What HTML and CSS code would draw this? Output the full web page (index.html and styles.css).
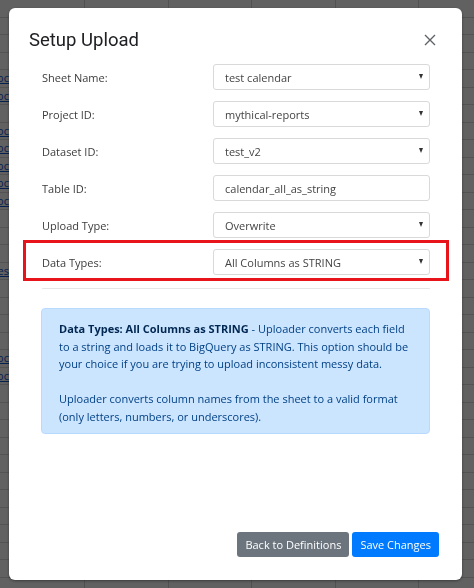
FILE: index.html
```html
<!DOCTYPE html>
<html lang="en">
<head>
    <meta charset="UTF-8">
    <meta name="viewport" content="width=device-width, initial-scale=1.0">
    <title>Setup Upload</title>
    <link rel="stylesheet" href="styles.css">
</head>
<body>
    <!-- sheet behind the dialog -->
    <div class="sheet">
        <div class="sheet-row"></div>
        <div class="sheet-row"></div>
        <div class="sheet-row"></div>
        <div class="sheet-row"></div>
        <div class="sheet-row"><a class="cell-link">calendar_doc</a></div>
        <div class="sheet-row"><a class="cell-link">calendar_doc</a></div>
        <div class="sheet-row"></div>
        <div class="sheet-row"><a class="cell-link">reports_doc</a></div>
        <div class="sheet-row"><a class="cell-link">reports_doc</a></div>
        <div class="sheet-row"><a class="cell-link">reports_doc</a></div>
        <div class="sheet-row"><a class="cell-link">reports_doc</a></div>
        <div class="sheet-row"><a class="cell-link">reports_doc</a></div>
        <div class="sheet-row"></div>
        <div class="sheet-row"></div>
        <div class="sheet-row"></div>
        <div class="sheet-row"><a class="cell-link">types.</a></div>
        <div class="sheet-row"></div>
        <div class="sheet-row"></div>
        <div class="sheet-row"></div>
        <div class="sheet-row"></div>
        <div class="sheet-row"><a class="cell-link">string_doc</a></div>
        <div class="sheet-row"><a class="cell-link">string_doc</a></div>
        <div class="sheet-row"></div>
        <div class="sheet-row"></div>
        <div class="sheet-row"></div>
        <div class="sheet-row"></div>
        <div class="sheet-row"></div>
        <div class="sheet-row"></div>
        <div class="sheet-row"></div>
        <div class="sheet-row"></div>
        <div class="sheet-row"></div>
        <div class="sheet-row"></div>
        <div class="sheet-row"></div>
        <div class="sheet-row"></div>
    </div>

    <div class="backdrop">
        <div class="modal">
            <div class="modal-header">
                <h2 class="modal-title">Setup Upload</h2>
                <button class="close" aria-label="Close">
                    <svg width="12" height="12" viewBox="0 0 12 12">
                        <path d="M1 1 L11 11 M11 1 L1 11" stroke="#5f6368" stroke-width="1.4" fill="none"/>
                    </svg>
                </button>
            </div>

            <div class="modal-body">
                <div class="form">
                    <div class="row">
                        <label class="label">Sheet Name:</label>
                        <div class="select"><span>test calendar</span><span class="caret"></span></div>
                    </div>
                    <div class="row">
                        <label class="label">Project ID:</label>
                        <div class="select"><span>mythical-reports</span><span class="caret"></span></div>
                    </div>
                    <div class="row">
                        <label class="label">Dataset ID:</label>
                        <div class="select"><span>test_v2</span><span class="caret"></span></div>
                    </div>
                    <div class="row">
                        <label class="label" for="tableId">Table ID:</label>
                        <input id="tableId" class="input" type="text" value="calendar_all_as_string">
                    </div>
                    <div class="row">
                        <label class="label">Upload Type:</label>
                        <div class="select"><span>Overwrite</span><span class="caret"></span></div>
                    </div>
                    <div class="row row-marked">
                        <label class="label">Data Types:</label>
                        <div class="select"><span>All Columns as STRING</span><span class="caret"></span></div>
                        <span class="marker"></span>
                    </div>
                </div>

                <hr class="divider">

                <div class="alert">
                    <p><b>Data Types: All Columns as STRING</b> - Uploader converts each field to a string and loads it to BigQuery as STRING. This option should be your choice if you are trying to upload inconsistent messy data.</p>
                    <p>Uploader converts column names from the sheet to a valid format (only letters, numbers, or underscores).</p>
                </div>
            </div>

            <div class="modal-footer">
                <button class="btn btn-secondary">Back to Definitions</button>
                <button class="btn btn-primary">Save Changes</button>
            </div>
        </div>
    </div>
</body>
</html>
```

FILE: styles.css
```css
body {
    margin: 0;
    font-family: "Open Sans", "Noto Sans", Arial, sans-serif;
    background-color: white;
}

/* spreadsheet in the background */
.sheet {
    height: 588px;
    overflow: hidden;
    background-image: repeating-linear-gradient(to right, transparent 0, transparent 82.5px, #d6d6d6 82.5px, #d6d6d6 83.5px);
    background-position: 2px 0;
}
.sheet-row {
    height: 16.5px;
    border-bottom: 1px solid #dadada;
}
.cell-link {
    display: block;
    width: 9px;
    overflow: hidden;
    direction: rtl;
    white-space: nowrap;
    font-size: 11px;
    line-height: 16px;
    color: #1155cc;
    text-decoration: underline;
}

/* dark overlay + dialog */
.backdrop {
    position: fixed;
    inset: 0;
    background-color: rgba(0, 0, 0, 0.62);
}
.modal {
    display: flex;
    flex-direction: column;
    box-sizing: border-box;
    width: 453px;
    height: 572px;
    margin: 8px 0 0 9px;
    background-color: white;
    border-radius: 6px;
    box-shadow: 0 1px 3px rgba(0, 0, 0, 0.4);
}
.modal-header {
    display: flex;
    justify-content: space-between;
    align-items: center;
    padding: 20px 26px 0 20px;
}
.modal-title {
    margin: 0;
    font-family: Roboto, "Open Sans", sans-serif;
    font-weight: 400;
    font-size: 18.5px;
    line-height: 24px;
    color: #202124;
}
.close {
    display: flex;
    padding: 0;
    border: none;
    background: none;
    cursor: pointer;
}

.modal-body {
    padding: 12px 32px 0 32px;
}
.form {
    display: flex;
    flex-direction: column;
    gap: 11px;
    padding-left: 1px;
}
.row {
    display: flex;
    align-items: center;
    position: relative;
}
.label {
    width: 171px;
    font-size: 11px;
    color: #3c3c3c;
}
.select, .input {
    box-sizing: border-box;
    flex: 1;
    height: 26px;
    padding: 0 6px 0 11px;
    border: 1px solid #d9d9d9;
    border-radius: 3px;
    background-color: white;
    font-family: inherit;
    font-size: 11px;
    color: #444;
}
.select {
    display: flex;
    justify-content: space-between;
    align-items: center;
}
.input {
    outline: none;
}
.caret {
    width: 0;
    height: 0;
    margin-top: -2px;
    border-left: 2.5px solid transparent;
    border-right: 2.5px solid transparent;
    border-top: 5px solid #333;
}
/* red annotation box round the Data Types row */
.marker {
    position: absolute;
    top: -9px;
    bottom: -6px;
    left: -19px;
    right: -19px;
    border: 3px solid #e8141c;
}

.divider {
    margin: 13px 0 0 1px;
    border: none;
    border-top: 1px solid #e6e6e6;
}

.alert {
    margin-top: 19px;
    padding: 11px 16px 8px 17px;
    background-color: #cce5ff;
    border: 1px solid #b8daff;
    border-radius: 4px;
    color: #004085;
    font-size: 11px;
    line-height: 17.5px;
}
.alert p {
    margin: 0;
}
.alert p + p {
    margin-top: 17.5px;
}
.alert b {
    color: #002752;
}

.modal-footer {
    display: flex;
    justify-content: flex-end;
    gap: 3px;
    margin-top: auto;
    padding: 0 23px 23px 0;
}
.btn {
    height: 25px;
    padding: 0 8px;
    border: none;
    border-radius: 3px;
    font-family: inherit;
    font-size: 11px;
    color: white;
    cursor: pointer;
}
.btn-secondary {
    background-color: #6c757d;
}
.btn-primary {
    background-color: #007bff;
}
```
